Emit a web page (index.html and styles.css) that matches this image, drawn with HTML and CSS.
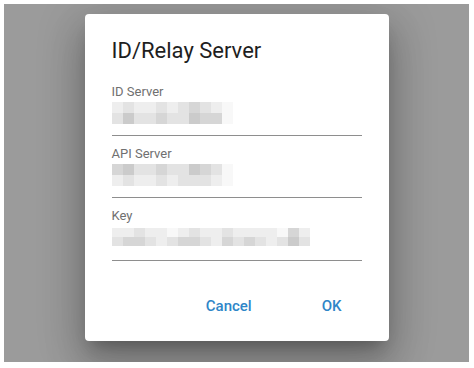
FILE: index.html
```html
<!DOCTYPE html>
<html>
<head>
<meta charset="utf-8">
<link rel="stylesheet" href="styles.css">
</head>
<body>
<div class="backdrop">
  <div class="dialog">
    <h1 class="title">ID/Relay Server</h1>
    <div class="field">
      <div class="label">ID Server</div>
      <div class="mosaic m-id">
        <i class="a"></i><i class="b"></i><i class="a"></i><i class="a"></i><i class="b"></i><i class="a"></i><i class="b"></i><i class="c"></i><i class="b"></i><i class="a"></i><i class="w"></i>
        <i class="b"></i><i class="d"></i><i class="b"></i><i class="b"></i><i class="c"></i><i class="b"></i><i class="b"></i><i class="d"></i><i class="c"></i><i class="c"></i><i class="w"></i>
      </div>
    </div>
    <div class="field">
      <div class="label">API Server</div>
      <div class="mosaic m-id">
        <i class="c"></i><i class="d"></i><i class="b"></i><i class="b"></i><i class="c"></i><i class="b"></i><i class="b"></i><i class="d"></i><i class="c"></i><i class="b"></i><i class="w"></i>
        <i class="a"></i><i class="b"></i><i class="a"></i><i class="a"></i><i class="b"></i><i class="a"></i><i class="b"></i><i class="b"></i><i class="b"></i><i class="a"></i><i class="w"></i>
      </div>
    </div>
    <div class="field">
      <div class="label">Key</div>
      <div class="mosaic m-key">
        <i class="a"></i><i class="a"></i><i class="b"></i><i class="a"></i><i class="a"></i><i class="w"></i><i class="a"></i><i class="b"></i><i class="a"></i><i class="a"></i><i class="b"></i><i class="a"></i><i class="a"></i><i class="a"></i><i class="a"></i><i class="w"></i><i class="c"></i><i class="a"></i>
        <i class="b"></i><i class="c"></i><i class="c"></i><i class="b"></i><i class="a"></i><i class="b"></i><i class="c"></i><i class="c"></i><i class="b"></i><i class="a"></i><i class="c"></i><i class="b"></i><i class="c"></i><i class="b"></i><i class="a"></i><i class="b"></i><i class="d"></i><i class="b"></i>
      </div>
    </div>
    <div class="actions">
      <button class="btn">Cancel</button>
      <button class="btn">OK</button>
    </div>
  </div>
</div>
</body>
</html>
```
FILE: styles.css
```css
html, body {
  margin: 0;
  padding: 0;
  background: #ffffff;
}
body {
  padding: 4px 5px 6px 4px;
  font-family: Roboto, "Liberation Sans", sans-serif;
}
.backdrop {
  height: 358px;
  background: #9b9b9b;
  display: flex;
  justify-content: center;
  align-items: flex-start;
  padding-top: 10px;
  box-sizing: border-box;
  overflow: hidden;
}
.dialog {
  width: 304px;
  height: 327px;
  box-sizing: border-box;
  background: #ffffff;
  border-radius: 4px;
  padding: 24px 27px 0 27px;
  box-shadow: 0 11px 15px -7px rgba(0,0,0,0.24), 0 24px 38px 3px rgba(0,0,0,0.18), 0 9px 46px 8px rgba(0,0,0,0.14);
  display: flex;
  flex-direction: column;
}
.title {
  margin: 0;
  font-size: 22px;
  line-height: 26px;
  font-weight: 400;
  color: #1e1e1e;
}
.field {
  margin-top: 10px;
  padding-bottom: 11px;
  border-bottom: 1px solid #8e8e8e;
}
.field:first-of-type {
  margin-top: 20px;
}
.label {
  font-size: 13px;
  line-height: 16px;
  color: #707070;
}
.mosaic {
  display: grid;
  margin-top: 2px;
}
.mosaic i {
  display: block;
}
.m-id {
  grid-template-columns: repeat(11, 11px);
  grid-auto-rows: 11px;
}
.m-key {
  margin-top: 4px;
  grid-template-columns: repeat(18, 11px);
  grid-auto-rows: 9px;
  margin-bottom: 3px;
}
.mosaic .a { background: #eeeeee; }
.mosaic .b { background: #e3e3e3; }
.mosaic .c { background: #d6d6d6; }
.mosaic .d { background: #cbcbcb; }
.mosaic .w { background: #f8f8f8; }
.actions {
  display: flex;
  justify-content: flex-end;
  gap: 30px;
  margin-top: 28px;
}
.btn {
  border: 0;
  background: transparent;
  padding: 8px 20px;
  font-family: Roboto, "Liberation Sans", sans-serif;
  font-size: 15px;
  line-height: 18px;
  font-weight: 500;
  color: #2f86c8;
}
```
